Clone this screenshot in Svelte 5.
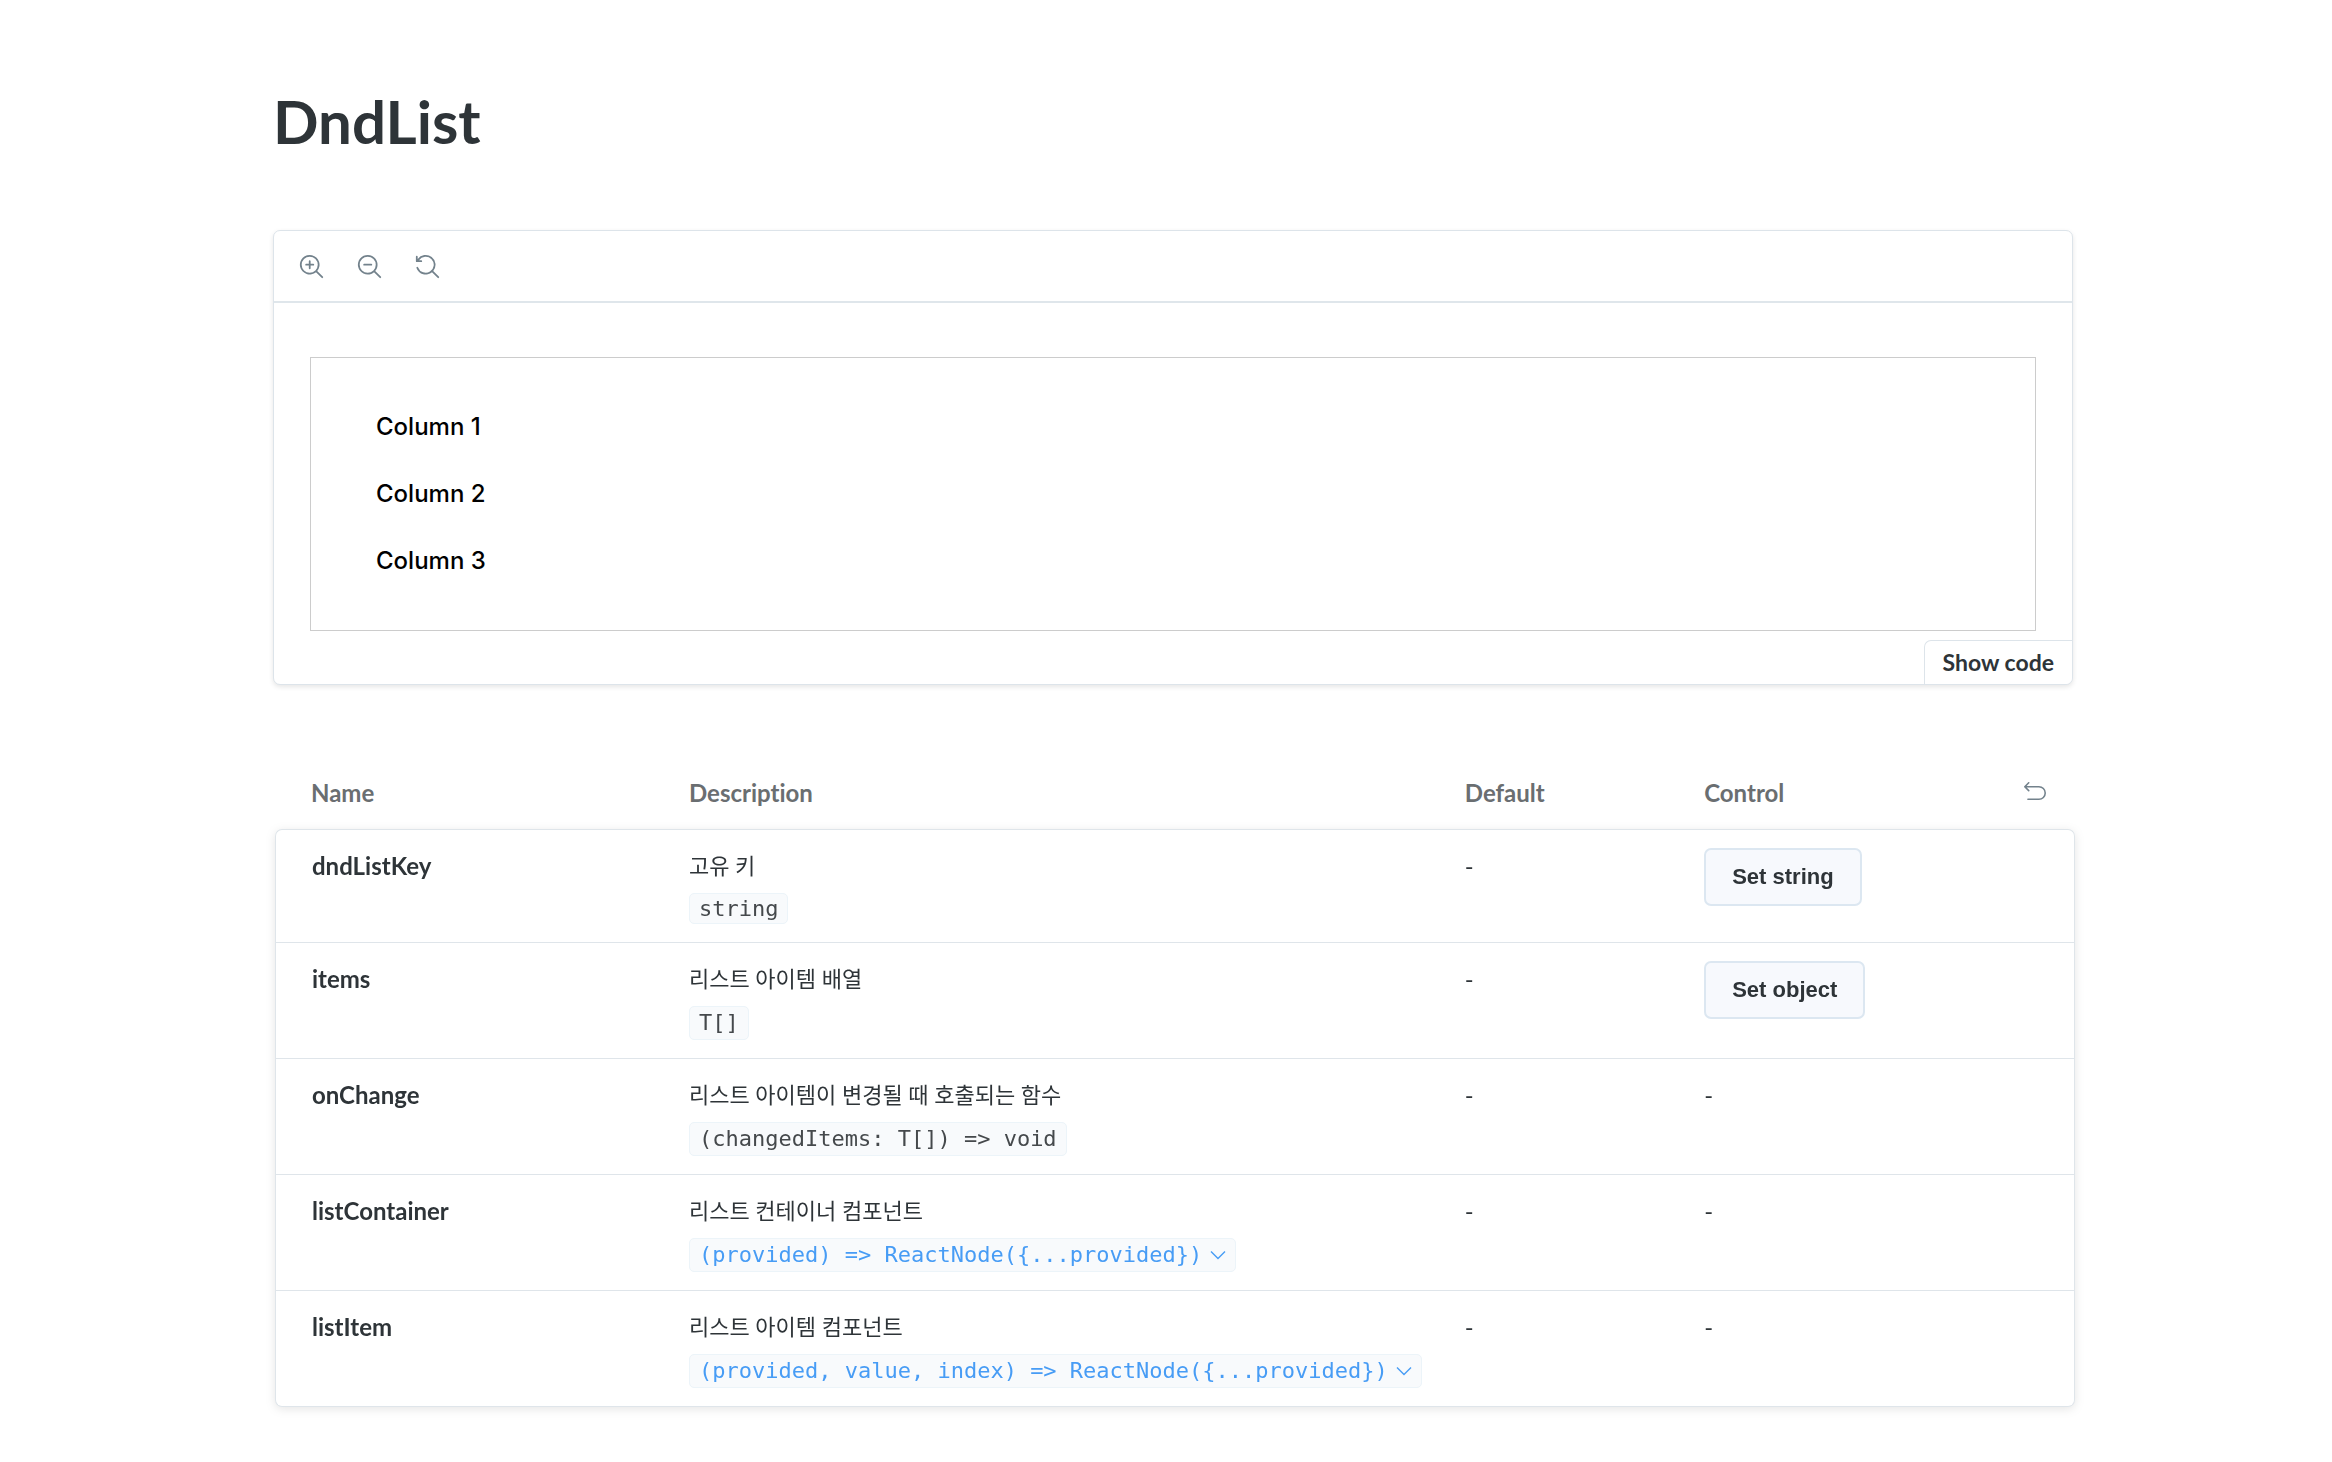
<script lang="ts">
  type Arg = {
    name: string;
    description: string;
    type: string;
    kind: 'simple' | 'compound' | 'expandable';
    control?: string;
  };

  const columns = ['Column 1', 'Column 2', 'Column 3'];

  const args: Arg[] = [
    { name: 'dndListKey', description: '고유 키', type: 'string', kind: 'simple', control: 'Set string' },
    { name: 'items', description: '리스트 아이템 배열', type: 'T[]', kind: 'compound', control: 'Set object' },
    {
      name: 'onChange',
      description: '리스트 아이템이 변경될 때 호출되는 함수',
      type: '(changedItems: T[]) => void',
      kind: 'compound',
    },
    {
      name: 'listContainer',
      description: '리스트 컨테이너 컴포넌트',
      type: '(provided) => ReactNode({...provided})',
      kind: 'expandable',
    },
    {
      name: 'listItem',
      description: '리스트 아이템 컴포넌트',
      type: '(provided, value, index) => ReactNode({...provided})',
      kind: 'expandable',
    },
  ];
</script>

<main class="docs">
  <div class="content">
    <h1>DndList</h1>

    <section class="preview">
      <div class="toolbar">
        <button class="icon-btn" aria-label="Zoom in">
          <svg viewBox="0 0 14 14">
            <path d="M6 3.5a.5.5 0 01.5.5v1.5H8a.5.5 0 010 1H6.5V8a.5.5 0 01-1 0V6.5H4a.5.5 0 010-1h1.5V4a.5.5 0 01.5-.5z" />
            <path fill-rule="evenodd" d="M9.544 10.206a5.5 5.5 0 11.662-.662.5.5 0 01.148.102l3 3a.5.5 0 01-.708.708l-3-3a.5.5 0 01-.102-.148zM10.5 6a4.5 4.5 0 11-9 0 4.5 4.5 0 019 0z" />
          </svg>
        </button>
        <button class="icon-btn" aria-label="Zoom out">
          <svg viewBox="0 0 14 14">
            <path d="M4 5.5a.5.5 0 000 1h4a.5.5 0 000-1H4z" />
            <path fill-rule="evenodd" d="M6 11.5c1.35 0 2.587-.487 3.544-1.294a.5.5 0 00.102.148l3 3a.5.5 0 00.708-.708l-3-3a.5.5 0 00-.148-.102A5.5 5.5 0 106 11.5zm0-1a4.5 4.5 0 100-9 4.5 4.5 0 000 9z" />
          </svg>
        </button>
        <button class="icon-btn" aria-label="Reset zoom">
          <svg viewBox="0 0 14 14">
            <path d="M1.5 2.837V1.5a.5.5 0 00-1 0V4a.5.5 0 00.5.5h2.5a.5.5 0 000-1H2.258a4.5 4.5 0 11-.496 4.016.5.5 0 10-.942.337 5.502 5.502 0 008.724 2.353.5.5 0 00.102.148l3 3a.5.5 0 00.708-.708l-3-3a.5.5 0 00-.148-.102A5.5 5.5 0 101.5 2.837z" />
          </svg>
        </button>
      </div>
      <div class="story">
        <ul class="dnd-list">
          {#each columns as column}
            <li>{column}</li>
          {/each}
        </ul>
      </div>
      <button class="show-code">Show code</button>
    </section>

    <table class="args">
      <thead>
        <tr>
          <th class="col-name">Name</th>
          <th class="col-description">Description</th>
          <th class="col-default">Default</th>
          <th class="col-control">
            <div class="control-head">
              Control
              <button class="icon-btn reset" aria-label="Reset controls">
                <svg viewBox="0 0 14 14">
                  <path d="M3.354.146a.5.5 0 010 .708L1.707 2.5H9.5a4.5 4.5 0 110 9h-7a.5.5 0 010-1h7a3.5 3.5 0 100-7H1.707l1.647 1.646a.5.5 0 11-.708.708l-2.5-2.5a.5.5 0 010-.708l2.5-2.5a.5.5 0 01.708 0z" />
                </svg>
              </button>
            </div>
          </th>
        </tr>
      </thead>
      <tbody>
        {#each args as arg}
          <tr>
            <td class="name">{arg.name}</td>
            <td>
              <div class="description">{arg.description}</div>
              {#if arg.kind === 'expandable'}
                <button class="type expandable">
                  {arg.type}
                  <svg viewBox="0 0 16 10"><path d="M1 1.5l7 7 7-7" /></svg>
                </button>
              {:else}
                <code class="type {arg.kind}">{arg.type}</code>
              {/if}
            </td>
            <td>-</td>
            <td>
              {#if arg.control}
                <button class="set-btn">{arg.control}</button>
              {:else}
                -
              {/if}
            </td>
          </tr>
        {/each}
      </tbody>
    </table>
  </div>
</main>

<style>
  :global(body) {
    background: #fff;
  }

  .docs {
    box-sizing: border-box;
    padding: 85px 20px 54px 34px;
    color: #2e3438;
    font-family: Lato, 'Noto Sans CJK KR', sans-serif;
    font-size: 24px;
    font-variant-ligatures: none;
    line-height: 36px;
  }

  .content {
    max-width: 1800px;
    margin: 0 auto;
  }

  button {
    margin: 0;
    padding: 0;
    border: 0;
    background: none;
    color: inherit;
    font: inherit;
    cursor: pointer;
  }

  h1 {
    margin: 0 0 73px;
    font-size: 60px;
    font-weight: 700;
    line-height: 72px;
  }

  .preview {
    position: relative;
    border: 1px solid #dde4ea;
    border-radius: 7px;
    background: #fff;
    box-shadow: 0 2px 5px rgba(0, 0, 0, 0.1);
  }

  .toolbar {
    display: flex;
    align-items: center;
    gap: 8px;
    height: 70px;
    padding: 0 12px;
    border-bottom: 2px solid #dfe6eb;
  }

  .icon-btn {
    display: flex;
    align-items: center;
    justify-content: center;
    width: 50px;
    height: 50px;
    color: #73828c;
  }

  .icon-btn svg {
    width: 25px;
    height: 25px;
    fill: currentColor;
  }

  .story {
    padding: 54px 36px 53px;
  }

  .dnd-list {
    margin: 0;
    padding: 35px 65px 36px;
    border: 1px solid #ccc;
    color: #000;
    font-family: Inter, sans-serif;
    font-size: 24px;
    font-weight: 500;
    list-style: none;
  }

  .dnd-list li {
    padding: 16px 0 15px;
  }

  .show-code {
    position: absolute;
    right: 0;
    bottom: 0;
    height: 44px;
    padding: 0 18px 2px;
    border-top: 1px solid #dde4ea;
    border-left: 1px solid #dde4ea;
    border-radius: 7px 0 7px 0;
    background: #fff;
    font-size: 23px;
    font-weight: 700;
  }

  .args {
    width: 100%;
    margin: 84px -2px 0 2px;
    border-spacing: 0;
    table-layout: fixed;
    text-align: left;
  }

  th,
  td {
    box-sizing: border-box;
  }

  th {
    padding: 0 27px 12px;
    color: #6a6e71;
    font-weight: 700;
  }

  td {
    padding: 18px 27px;
    border-top: 1px solid #dfe5ea;
    background: #fff;
    vertical-align: top;
  }

  th:first-child {
    padding-left: 36px;
  }

  td:first-child {
    padding-left: 36px;
    border-left: 1px solid #dfe5ea;
  }

  .col-name {
    width: 21.5%;
  }

  .col-description {
    width: 43.1%;
  }

  .col-default {
    width: 13.3%;
  }

  .control-head {
    display: flex;
    align-items: center;
    justify-content: space-between;
    height: 48px;
    margin-right: -12px;
  }

  .reset svg {
    width: 22px;
    height: 22px;
  }

  tbody {
    filter: drop-shadow(0 2px 5px rgba(0, 0, 0, 0.1));
  }

  td:last-child {
    border-right: 1px solid #dfe5ea;
  }

  tr:last-child td {
    border-bottom: 1px solid #dfe5ea;
  }

  tbody tr:first-child td:first-child {
    border-top-left-radius: 7px;
  }

  tbody tr:first-child td:last-child {
    border-top-right-radius: 7px;
  }

  tbody tr:last-child td:first-child {
    border-bottom-left-radius: 7px;
  }

  tbody tr:last-child td:last-child {
    border-bottom-right-radius: 7px;
  }

  .name {
    font-weight: 700;
  }

  .description {
    margin-bottom: 9px;
    font-size: 22px;
  }

  .type {
    display: flex;
    align-items: center;
    box-sizing: border-box;
    width: fit-content;
    height: 34px;
    padding: 0 9px;
    border: 1px solid #ecf4f9;
    border-radius: 5px;
    background: #f8fafc;
    color: #45494c;
    font-family: 'DejaVu Sans Mono', monospace;
    font-size: 22px;
    white-space: nowrap;
  }

  .type.simple {
    height: 31px;
  }

  .type.expandable {
    gap: 8px;
    color: #479cf5;
  }

  .type svg {
    width: 16px;
    height: 10px;
    fill: none;
    stroke: currentColor;
    stroke-width: 1.4;
  }

  .set-btn {
    height: 58px;
    padding: 0 26px;
    border: 2px solid #dce7f1;
    border-radius: 7px;
    background: #f7f9fd;
    font-family: 'Liberation Sans', sans-serif;
    font-size: 22px;
    font-weight: 700;
  }
</style>
